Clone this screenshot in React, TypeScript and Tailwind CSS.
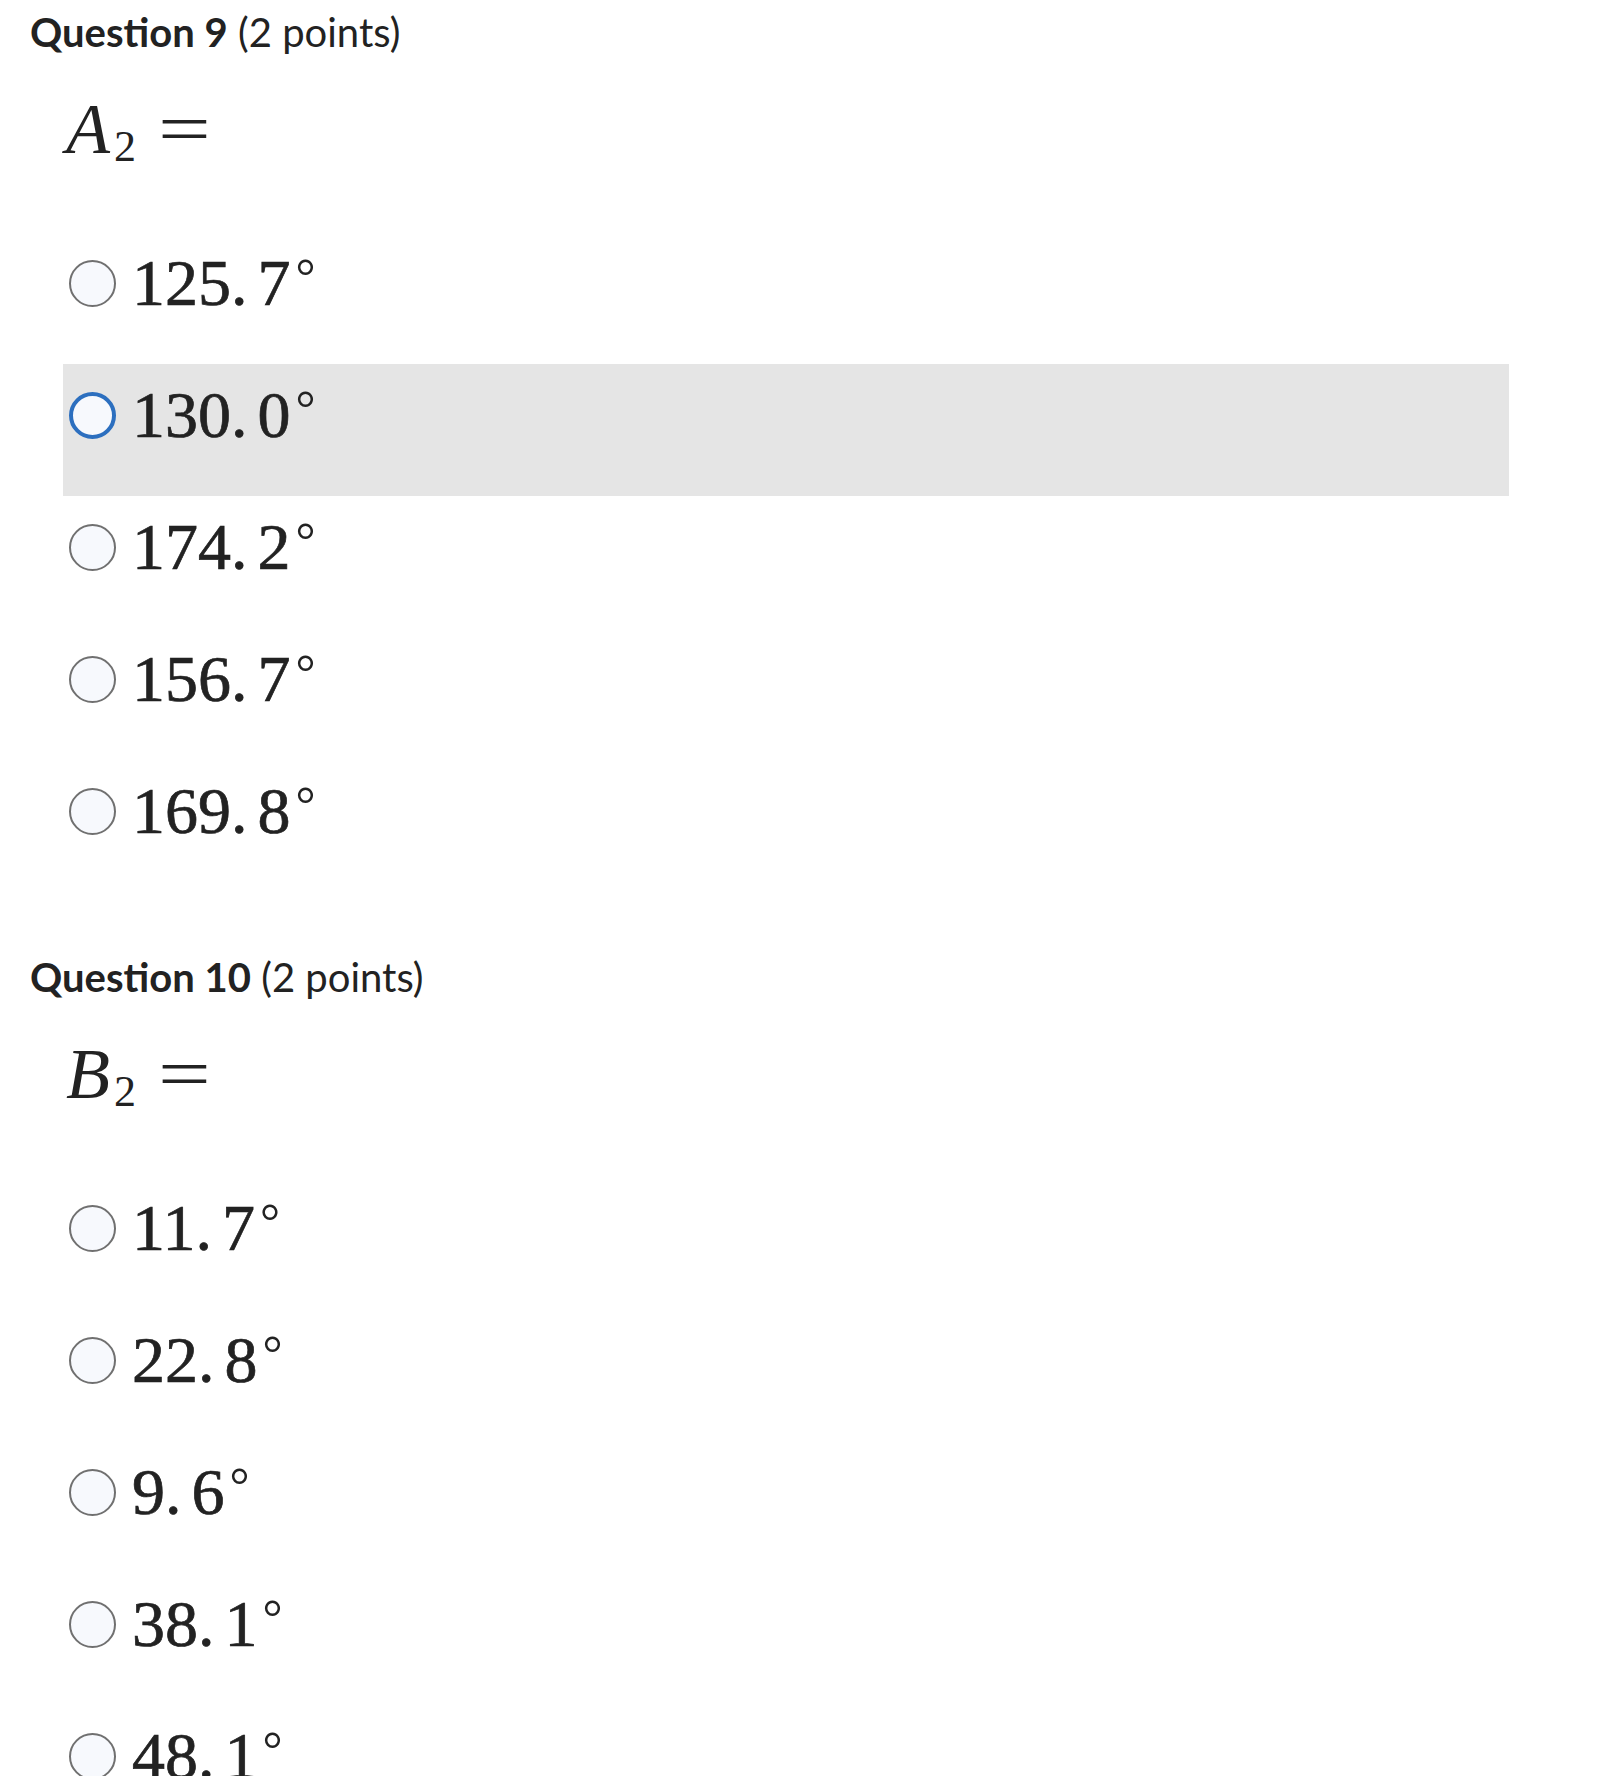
type Choice = { whole: string; frac: string; selected?: boolean };

type Question = {
  number: number;
  points: number;
  symbol: string;
  choices: Choice[];
};

const questions: Question[] = [
  {
    number: 9,
    points: 2,
    symbol: "A",
    choices: [
      { whole: "125.", frac: "7" },
      { whole: "130.", frac: "0", selected: true },
      { whole: "174.", frac: "2" },
      { whole: "156.", frac: "7" },
      { whole: "169.", frac: "8" },
    ],
  },
  {
    number: 10,
    points: 2,
    symbol: "B",
    choices: [
      { whole: "11.", frac: "7" },
      { whole: "22.", frac: "8" },
      { whole: "9.", frac: "6" },
      { whole: "38.", frac: "1" },
      { whole: "48.", frac: "1" },
    ],
  },
];

const Radio = ({ checked }: { checked?: boolean }) => (
  <span
    className={
      checked
        ? "box-border block h-[47px] w-[47px] shrink-0 rounded-full border-[4px] border-[#2c6fbf] bg-[#f7f9fd]"
        : "box-border block h-[47px] w-[47px] shrink-0 rounded-full border-2 border-[#707070] bg-[#f7f9fd]"
    }
  />
);

const ChoiceRow = ({ choice }: { choice: Choice }) => (
  <label
    className={`flex h-[132px] w-[1446px] cursor-pointer items-start pl-[6px] pt-[19px] ${
      choice.selected ? "bg-[#e5e5e5]" : ""
    }`}
  >
    <div className="flex h-16 items-center gap-4">
      <Radio checked={choice.selected} />
      <span className="flex items-start font-['Liberation_Serif',serif] text-[66px] leading-none text-[#222] [-webkit-text-stroke:0.7px_#222]">
        <span>{choice.whole}</span>
        <span className="ml-[10px]">{choice.frac}</span>
        <span className="ml-[5px] mt-[1px] text-[50px] [-webkit-text-stroke:0px]">°</span>
      </span>
    </div>
  </label>
);

const QuestionBlock = ({ q }: { q: Question }) => (
  <section>
    <h2 className="pl-[30px] font-['Lato',sans-serif] text-[40px] leading-[1.2] text-[#222]">
      <span className="font-bold">Question {q.number}</span>{" "}
      <span className="font-normal">({q.points} points)</span>
    </h2>
    <div className="mt-[37px] flex items-baseline pl-[66px] font-['Liberation_Serif',serif] text-[72px] leading-none text-[#222]">
      <span className="italic">{q.symbol}</span>
      <span className="relative top-[8px] ml-[4px] text-[44px]">2</span>
      <span className="ml-[22px] inline-block origin-left scale-x-[1.3]">=</span>
    </div>
    <div className="mt-[67px] pl-[63px]">
      {q.choices.map((c, i) => (
        <ChoiceRow key={i} choice={c} />
      ))}
    </div>
  </section>
);

export default function App() {
  return (
    <div className="min-h-[1776px] w-full bg-white pt-[8px]">
      <div className="flex flex-col gap-[61px]">
        {questions.map((q) => (
          <QuestionBlock key={q.number} q={q} />
        ))}
      </div>
    </div>
  );
}
